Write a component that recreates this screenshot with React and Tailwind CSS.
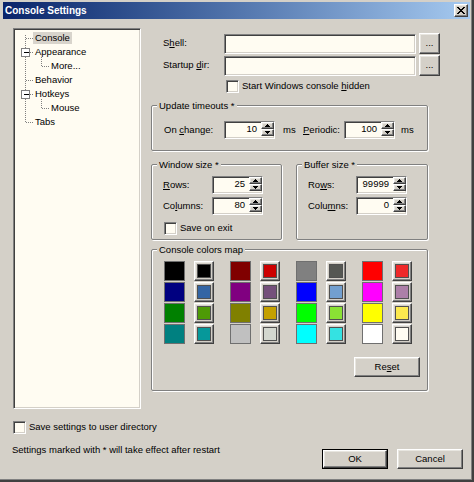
import React from "react";

const sunken =
  "border border-t-[#808080] border-l-[#808080] border-b-white border-r-white shadow-[inset_1px_1px_0_#404040,inset_-1px_-1px_0_#d4d0c8]";
const raised =
  "border border-t-white border-l-white border-b-[#404040] border-r-[#404040] shadow-[inset_-1px_-1px_0_#808080,inset_1px_1px_0_#e8e6e0]";
const etched =
  "border border-[#808080] shadow-[inset_1px_1px_0_#fff,1px_1px_0_#fff] rounded-[2px]";

const bigColors = [
  ["#000000", "#800000", "#808080", "#ff0000"],
  ["#000080", "#800080", "#0000ff", "#ff00ff"],
  ["#008000", "#808000", "#00ff00", "#ffff00"],
  ["#008080", "#c0c0c0", "#00ffff", "#ffffff"],
];
const smallColors = [
  ["#000000", "#cc0000", "#555753", "#ef2929"],
  ["#3465a4", "#75507b", "#729fcf", "#ad7fa8"],
  ["#4e9a06", "#c4a000", "#8ae234", "#fce94f"],
  ["#06989a", "#d3d7cf", "#34e2e2", "#fffcf2"],
];

function Arrow({ up }) {
  return (
    <svg width="5" height="3" viewBox="0 0 5 3" shapeRendering="crispEdges">
      {up ? (
        <path d="M2 0h1v1h1v1h1v1H0V2h1V1h1z" fill="#000" />
      ) : (
        <path d="M0 0h5v1H4v1H3v1H2V2H1V1H0z" fill="#000" />
      )}
    </svg>
  );
}

function Spin({ value, w = "w-[51px]" }) {
  return (
    <div className={`${sunken} ${w} h-[18px] flex bg-[#fffcf2]`}>
      <div className="flex-1 text-right pr-[4px] leading-[14px]">{value}</div>
      <div className="w-[13px] flex flex-col">
        <div className={`${raised} h-[7px] bg-[#d4d0c8] flex items-center justify-center`}>
          <Arrow up />
        </div>
        <div className={`${raised} h-[7px] bg-[#d4d0c8] flex items-center justify-center`}>
          <Arrow />
        </div>
      </div>
    </div>
  );
}

function Check() {
  return <div className={`${sunken} w-[13px] h-[13px] bg-[#fffcf2] shrink-0`} />;
}

function Legend({ children }) {
  return (
    <div className="-mt-[6px] ml-[5px] px-[2px] w-fit bg-[#d4d0c8] leading-[12px]">
      {children}
    </div>
  );
}

function Button({ children, def, w = "w-[66px]", h = "h-[20px]" }) {
  const inner = (
    <div className={`${raised} bg-[#d4d0c8] flex-1 flex items-center justify-center`}>
      {children}
    </div>
  );
  if (def) {
    return <div className={`${w} ${h} border border-black flex`}>{inner}</div>;
  }
  return <div className={`${w} ${h} flex`}>{inner}</div>;
}

function TreeLines() {
  const c = (i) => 9 + 14 * i;
  const dash = { stroke: "#808080", strokeDasharray: "1 1", strokeWidth: 1 };
  return (
    <svg className="absolute left-0 top-0" width="60" height="110" shapeRendering="crispEdges">
      <line x1="11.5" y1="6" x2="11.5" y2={c(6)} {...dash} />
      {[0, 1, 3, 4, 6].map((i) => (
        <line key={i} x1="12" y1={c(i) + 0.5} x2="19" y2={c(i) + 0.5} {...dash} />
      ))}
      {[2, 5].map((i) => (
        <g key={i}>
          <line x1="27.5" y1={c(i - 1) + 5} x2="27.5" y2={c(i)} {...dash} />
          <line x1="28" y1={c(i) + 0.5} x2="35" y2={c(i) + 0.5} {...dash} />
        </g>
      ))}
      {[1, 4].map((i) => (
        <g key={i}>
          <rect x="7.5" y={c(i) - 3.5} width="8" height="8" fill="#fff" stroke="#808080" />
          <line x1="9.5" y1={c(i) + 0.5} x2="14.5" y2={c(i) + 0.5} stroke="#000" />
        </g>
      ))}
    </svg>
  );
}

const treeItems = [
  { t: "Console", l: 0, sel: true },
  { t: "Appearance", l: 0 },
  { t: "More...", l: 1 },
  { t: "Behavior", l: 0 },
  { t: "Hotkeys", l: 0 },
  { t: "Mouse", l: 1 },
  { t: "Tabs", l: 0 },
];

export default function App() {
  return (
    <div className="w-[474px] h-[482px] bg-[#d4d0c8] text-black text-[9.5px] font-['Liberation_Sans',Arial,sans-serif] overflow-hidden flex flex-col shadow-[inset_-2px_-2px_0_#404040,inset_-3px_-3px_0_#808080]">
      {/* title bar */}
      <div className="ml-[3px] mr-[4px] mt-[2px] h-[17px] shrink-0 bg-linear-to-r from-[#0a246a] to-[#a6caf0] flex items-center justify-between">
        <span className="ml-[2px] text-white font-bold text-[10px]">Console Settings</span>
        <div className={`${raised} bg-[#d4d0c8] w-[14px] h-[13px] mr-[2px] flex items-center justify-center`}>
          <svg width="8" height="7" viewBox="0 0 8 7" shapeRendering="crispEdges">
            <path d="M0 0h2v1h1v1h2V1h1V0h2v1H7v1H6v1H5v1h1v1h1v1h1v1H6V6H5V5H3v1H2v1H0V6h1V5h1V4h1V3H2V2H1V1H0z" fill="#000" />
          </svg>
        </div>
      </div>

      {/* body */}
      <div className="flex h-[390px] shrink-0 pl-[13px]">
        {/* tree */}
        <div className={`${sunken} relative mt-[9px] w-[128px] h-[381px] bg-[#fffcf2] pt-[2px]`}>
          <TreeLines />
          {treeItems.map((it) => (
            <div
              key={it.t}
              className={`h-[14px] flex items-center ${it.l ? "pl-[35px]" : "pl-[19px]"}`}
            >
              <span className={`px-[2px] h-[12px] leading-[12px] ${it.sel ? "bg-[#d8d4cc]" : ""}`}>
                {it.t}
              </span>
            </div>
          ))}
        </div>

        {/* right column */}
        <div className="ml-[10px] w-[290px] flex flex-col">
          <div className="mt-[14px] h-[21px] flex items-center">
            <span className="pl-[12px] w-[73px]">
              S<u>h</u>ell:
            </span>
            <div className={`${sunken} w-[192px] h-[20px] bg-[#fffcf2]`} />
            <div className="ml-[3px]">
              <Button w="w-[21px]" h="h-[21px]">...</Button>
            </div>
          </div>
          <div className="mt-[1px] h-[21px] flex items-center">
            <span className="pl-[12px] w-[73px]">
              Startup <u>d</u>ir:
            </span>
            <div className={`${sunken} w-[192px] h-[20px] bg-[#fffcf2]`} />
            <div className="ml-[3px]">
              <Button w="w-[21px]" h="h-[21px]">...</Button>
            </div>
          </div>
          <div className="mt-[4px] h-[13px] flex items-center pl-[75px]">
            <Check />
            <span className="ml-[3px]">
              Start Windows console <u>h</u>idden
            </span>
          </div>

          {/* update timeouts */}
          <div className={`${etched} mt-[12px] w-[277px] h-[46px]`}>
            <Legend>Update timeouts *</Legend>
            <div className="mt-[9px] flex items-center h-[18px] pl-[12px]">
              <span className="w-[60px]">
                On <u>c</u>hange:
              </span>
              <Spin value="10" />
              <span className="ml-[8px] w-[20px]">ms</span>
              <span className="w-[41px]">
                <u>P</u>eriodic:
              </span>
              <Spin value="100" />
              <span className="ml-[6px]">ms</span>
            </div>
          </div>

          {/* window / buffer size */}
          <div className="mt-[13px] flex gap-[14px]">
            <div className={`${etched} w-[131px] h-[76px]`}>
              <Legend>Window size *</Legend>
              <div className="mt-[5px] pl-[11px] flex items-center h-[18px]">
                <span className="w-[49px]">
                  <u>R</u>ows:
                </span>
                <Spin value="25" />
              </div>
              <div className="mt-[3px] pl-[11px] flex items-center h-[18px]">
                <span className="w-[49px]">
                  Co<u>l</u>umns:
                </span>
                <Spin value="80" />
              </div>
              <div className="mt-[7px] pl-[12px] flex items-center h-[13px]">
                <Check />
                <span className="ml-[3px]">Save on exit</span>
              </div>
            </div>
            <div className={`${etched} w-[132px] h-[76px]`}>
              <Legend>Buffer size *</Legend>
              <div className="mt-[5px] pl-[11px] flex items-center h-[18px]">
                <span className="w-[48px]">
                  Ro<u>w</u>s:
                </span>
                <Spin value="99999" />
              </div>
              <div className="mt-[3px] pl-[11px] flex items-center h-[18px]">
                <span className="w-[48px]">
                  Colu<u>m</u>ns:
                </span>
                <Spin value="0" />
              </div>
            </div>
          </div>

          {/* colors */}
          <div className={`${etched} mt-[9px] w-[277px] h-[142px] flex flex-col`}>
            <Legend>Console colors map</Legend>
            <div className="mt-[5px] pl-[12px] flex flex-col gap-[1px]">
              {bigColors.map((row, r) => (
                <div key={r} className="flex gap-[16px]">
                  {row.map((col, i) => (
                    <div key={i} className="flex gap-[9px]">
                      <div
                        className="w-[21px] h-[20px] border border-[#6f6f6f]"
                        style={{ background: col }}
                      />
                      <div className={`${raised} w-[20px] h-[20px] bg-[#d4d0c8] p-[2px] flex`}>
                        <div
                          className="flex-1 border border-[#505050]"
                          style={{ background: smallColors[r][i] }}
                        />
                      </div>
                    </div>
                  ))}
                </div>
              ))}
            </div>
            <div className="mt-[13px] flex justify-end pr-[7px]">
              <Button>
                Re<u>s</u>et
              </Button>
            </div>
          </div>
        </div>
      </div>

      {/* bottom */}
      <div className="mt-[12px] h-[13px] flex items-center pl-[13px]">
        <Check />
        <span className="ml-[3px]">Save settings to user directory</span>
      </div>
      <div className="mt-[10px] flex items-start justify-between pl-[12px] pr-[11px]">
        <span className="leading-[12px]">Settings marked with * will take effect after restart</span>
        <div className="mt-[5px] flex gap-[9px]">
          <Button def>OK</Button>
          <Button>Cancel</Button>
        </div>
      </div>
    </div>
  );
}
